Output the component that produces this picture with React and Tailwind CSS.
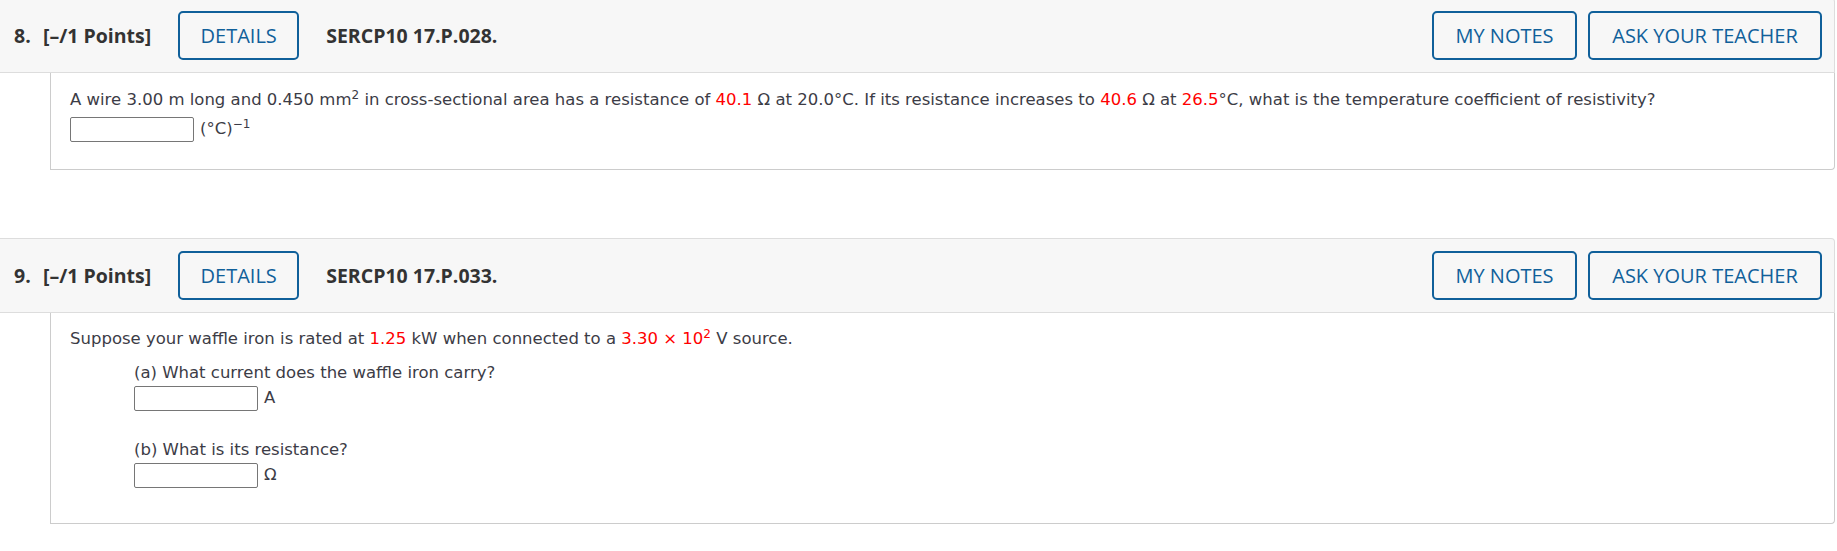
import React from "react";

const Red = ({ children }) => <span className="text-[#ff0000]">{children}</span>;

const AnswerBox = ({ unit, className = "" }) => (
  <div className={`flex items-center gap-[6px] ${className}`}>
    <div className="w-[124px] h-[25px] border border-[#767676] rounded-[2px] bg-white"></div>
    <span>{unit}</span>
  </div>
);

const OutlineBtn = ({ children, w }) => (
  <button
    className={`h-[49px] ${w} border-2 border-[#10609a] rounded-[5px] text-[#10609a] text-[20px] font-medium font-['Open_Sans',sans-serif] bg-transparent`}
  >
    {children}
  </button>
);

const QuestionHeader = ({ num, code }) => (
  <div className="flex items-center h-[75px] bg-[#f7f7f7] border-y border-r border-[#dddddd] rounded-tr-[4px] font-['Open_Sans',sans-serif] text-[#333333]">
    <span className="pl-[14px] w-[43px] font-bold text-[19.5px]">{num}.</span>
    <span className="font-bold text-[19.5px]">[–/1 Points]</span>
    <div className="ml-[27px]">
      <OutlineBtn w="w-[121px]">DETAILS</OutlineBtn>
    </div>
    <span className="ml-[27px] font-bold text-[19.5px]">{code}</span>
    <div className="ml-auto flex gap-[11px] pr-[12px]">
      <OutlineBtn w="w-[145px]">MY NOTES</OutlineBtn>
      <OutlineBtn w="w-[234px]">ASK YOUR TEACHER</OutlineBtn>
    </div>
  </div>
);

export default function App() {
  return (
    <div className="w-[1837px] h-[551px] overflow-hidden bg-white font-['DejaVu_Sans',sans-serif] text-[16.5px] text-[#3c3c46]">
      <div className="-mt-[2px] mr-[2px]">
        <QuestionHeader num="8" code="SERCP10 17.P.028." />
        <div className="ml-[50px] border-x border-b border-[#cccccc] rounded-br-[4px] pl-[19px] pt-[16px] h-[97px]">
          <p className="leading-[22px]">
            A wire 3.00 m long and 0.450 mm<sup className="text-[12px]">2</sup> in cross-sectional area has a resistance of{" "}
            <Red>40.1</Red> Ω at 20.0°C. If its resistance increases to <Red>40.6</Red> Ω at <Red>26.5</Red>°C, what is the
            temperature coefficient of resistivity?
          </p>
          <AnswerBox
            className="mt-[6px]"
            unit={
              <span>
                (°C)<sup className="text-[12px]">−1</sup>
              </span>
            }
          />
        </div>
      </div>

      <div className="mt-[68px] mr-[2px]">
        <QuestionHeader num="9" code="SERCP10 17.P.033." />
        <div className="ml-[50px] border-x border-b border-[#cccccc] rounded-br-[4px] pl-[19px] pt-[15px] h-[211px]">
          <p className="leading-[22px]">
            Suppose your waffle iron is rated at <Red>1.25</Red> kW when connected to a{" "}
            <Red>
              3.30 × 10<sup className="text-[12px]">2</sup>
            </Red>{" "}
            V source.
          </p>
          <div className="ml-[64px] mt-[12px]">
            <p className="leading-[22px]">(a) What current does the waffle iron carry?</p>
            <AnswerBox className="mt-[2px]" unit="A" />
            <p className="leading-[22px] mt-[28px]">(b) What is its resistance?</p>
            <AnswerBox className="mt-[2px]" unit="Ω" />
          </div>
        </div>
      </div>
    </div>
  );
}
